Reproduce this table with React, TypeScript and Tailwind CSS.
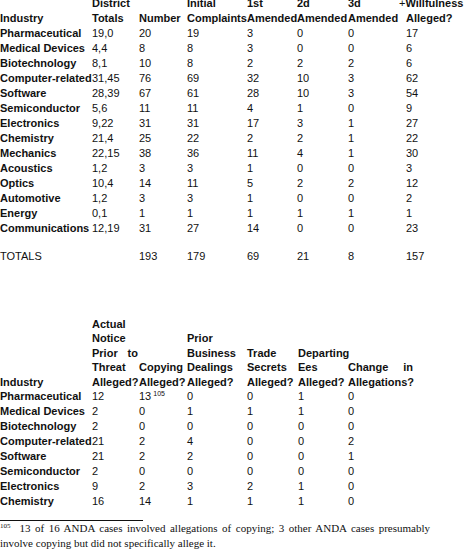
import React from "react";

const grid1 = "grid grid-cols-[92px_47px_48px_60px_50px_51px_58px_1fr]";
const grid2 = "grid grid-cols-[92px_47px_48px_60px_51px_50px_1fr]";

const table1: string[][] = [
  ["Pharmaceutical", "19,0", "20", "19", "3", "0", "0", "17"],
  ["Medical Devices", "4,4", "8", "8", "3", "0", "0", "6"],
  ["Biotechnology", "8,1", "10", "8", "2", "2", "2", "6"],
  ["Computer-related", "31,45", "76", "69", "32", "10", "3", "62"],
  ["Software", "28,39", "67", "61", "28", "10", "3", "54"],
  ["Semiconductor", "5,6", "11", "11", "4", "1", "0", "9"],
  ["Electronics", "9,22", "31", "31", "17", "3", "1", "27"],
  ["Chemistry", "21,4", "25", "22", "2", "2", "1", "22"],
  ["Mechanics", "22,15", "38", "36", "11", "4", "1", "30"],
  ["Acoustics", "1,2", "3", "3", "1", "0", "0", "3"],
  ["Optics", "10,4", "14", "11", "5", "2", "2", "12"],
  ["Automotive", "1,2", "3", "3", "1", "0", "0", "2"],
  ["Energy", "0,1", "1", "1", "1", "1", "1", "1"],
  ["Communications", "12,19", "31", "27", "14", "0", "0", "23"],
];

const table2: string[][] = [
  ["Pharmaceutical", "12", "13", "0", "0", "1", "0"],
  ["Medical Devices", "2", "0", "1", "1", "1", "0"],
  ["Biotechnology", "2", "0", "0", "0", "0", "0"],
  ["Computer-related", "21", "2", "4", "0", "0", "2"],
  ["Software", "21", "2", "2", "0", "0", "1"],
  ["Semiconductor", "2", "0", "0", "0", "0", "0"],
  ["Electronics", "9", "2", "3", "2", "1", "0"],
  ["Chemistry", "16", "14", "1", "1", "1", "0"],
];

const App = () => {
  return (
    <div
      className="w-[474px] h-[551px] overflow-hidden bg-white text-[#111] text-[11px] leading-[15px]"
      style={{ fontFamily: '"Liberation Sans", Arial, sans-serif' }}
    >
      {/* first table */}
      <div className="-mt-[4.5px]">
        <div className={`${grid1} font-bold items-end whitespace-nowrap`}>
          <div>Industry</div>
          <div>District<br />Totals</div>
          <div>Number</div>
          <div>Initial<br />Complaints</div>
          <div>1st<br />Amended</div>
          <div>2d<br />Amended</div>
          <div>3d<br />Amended</div>
          <div>
            <span className="-ml-[7px] font-normal">+</span>Willfulness
            <br />
            Alleged?
          </div>
        </div>
        {table1.map((r) => (
          <div key={r[0]} className={`${grid1} whitespace-nowrap`}>
            <div className="font-bold">{r[0]}</div>
            {r.slice(1).map((v, i) => (
              <div key={i}>{v}</div>
            ))}
          </div>
        ))}
        <div className={`${grid1} whitespace-nowrap mt-[13px]`}>
          <div>TOTALS</div>
          <div></div>
          <div>193</div>
          <div>179</div>
          <div>69</div>
          <div>21</div>
          <div>8</div>
          <div>157</div>
        </div>
      </div>

      {/* second table */}
      <div className="mt-[53px]">
        <div className={`${grid2} font-bold items-end whitespace-nowrap leading-[14.5px]`}>
          <div>Industry</div>
          <div className="w-[46px]">
            <div>Actual</div>
            <div>Notice</div>
            <div className="flex justify-between"><span>Prior</span><span>to</span></div>
            <div>Threat</div>
            <div>Alleged?</div>
          </div>
          <div>Copying<br />Alleged?</div>
          <div>Prior<br />Business<br />Dealings<br />Alleged?</div>
          <div>Trade<br />Secrets<br />Alleged?</div>
          <div>Departing<br />Ees<br />Alleged?</div>
          <div className="w-[65px]">
            <div className="flex justify-between"><span>Change</span><span>in</span></div>
            <div>Allegations?</div>
          </div>
        </div>
        {table2.map((r) => (
          <div key={r[0]} className={`${grid2} whitespace-nowrap`}>
            <div className="font-bold">{r[0]}</div>
            {r.slice(1).map((v, i) => (
              <div key={i}>
                {v}
                {r[0] === "Pharmaceutical" && i === 1 && (
                  <sup className="text-[7px] ml-[2px] -top-[4px]">105</sup>
                )}
              </div>
            ))}
          </div>
        ))}
      </div>

      {/* footnote */}
      <div className="mt-[11px] w-[143px] h-px bg-[#111]" />
      <p
        className="w-[430px] text-justify text-[11px] leading-[15px]"
        style={{ fontFamily: '"Liberation Serif", "Times New Roman", serif' }}
      >
        <sup className="text-[7px] -top-[4px] mr-[9px]">105</sup>
        13 of 16 ANDA cases involved allegations of copying; 3 other ANDA cases presumably
        involve copying but did not specifically allege it.
      </p>
    </div>
  );
};

export default App;
